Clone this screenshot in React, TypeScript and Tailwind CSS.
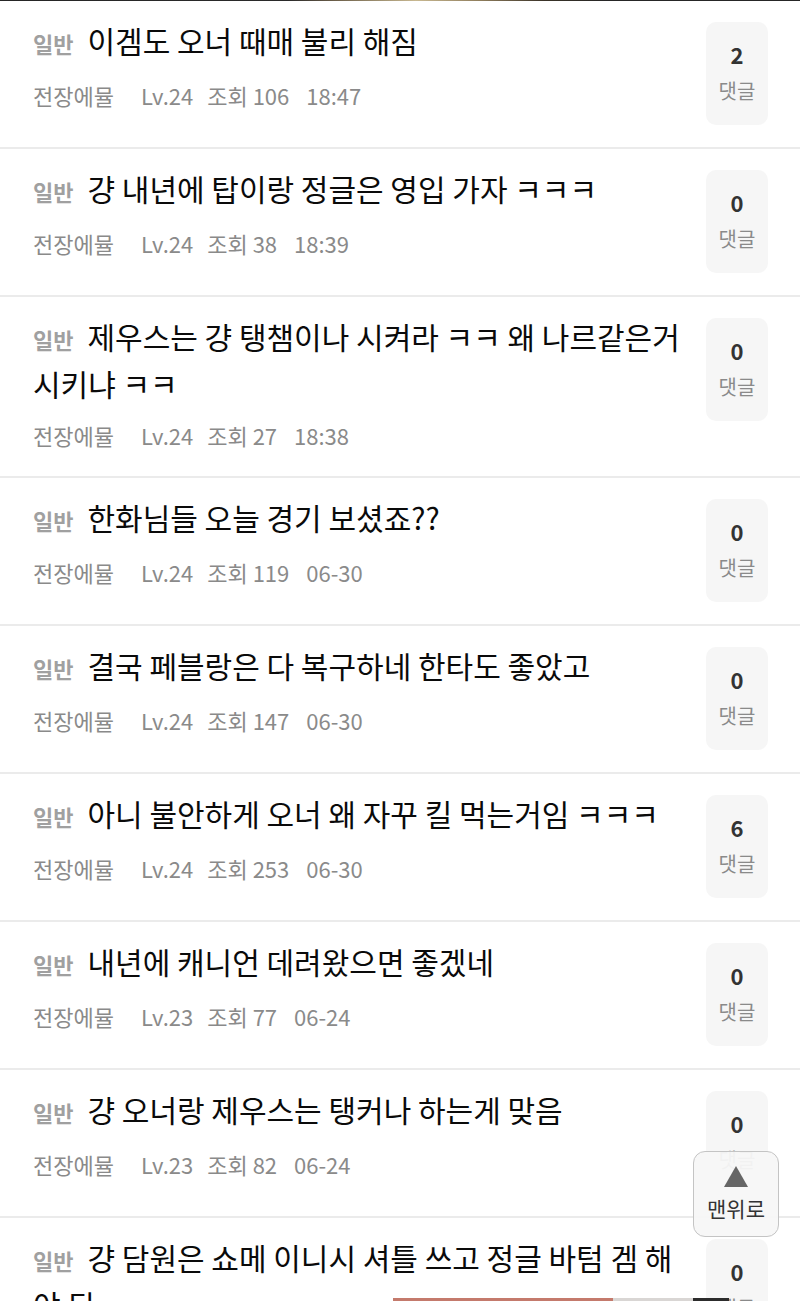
const POSTS = [
  { title: "이겜도 오너 때매 불리 해짐", lv: "Lv.24", views: 106, time: "18:47", comments: 2 },
  { title: "걍 내년에 탑이랑 정글은 영입 가자 ㅋㅋㅋ", lv: "Lv.24", views: 38, time: "18:39", comments: 0 },
  { title: "제우스는 걍 탱챔이나 시켜라 ㅋㅋ 왜 나르같은거 시키냐 ㅋㅋ", lv: "Lv.24", views: 27, time: "18:38", comments: 0 },
  { title: "한화님들 오늘 경기 보셨죠??", lv: "Lv.24", views: 119, time: "06-30", comments: 0 },
  { title: "결국 페블랑은 다 복구하네 한타도 좋았고", lv: "Lv.24", views: 147, time: "06-30", comments: 0 },
  { title: "아니 불안하게 오너 왜 자꾸 킬 먹는거임 ㅋㅋㅋ", lv: "Lv.24", views: 253, time: "06-30", comments: 6 },
  { title: "내년에 캐니언 데려왔으면 좋겠네", lv: "Lv.23", views: 77, time: "06-24", comments: 0 },
  { title: "걍 오너랑 제우스는 탱커나 하는게 맞음", lv: "Lv.23", views: 82, time: "06-24", comments: 0 },
  { title: "걍 담원은 쇼메 이니시 셔틀 쓰고 정글 바텀 겜 해야 됨", lv: "Lv.23", views: 64, time: "06-24", comments: 0 },
];

type Post = (typeof POSTS)[number];

export default function App() {
  return (
    <div className="relative h-[1301px] overflow-hidden bg-white font-['Noto_Sans_CJK_KR','Noto_Sans',sans-serif]">
      {/* bottom edge of the image above the list */}
      <div className="h-[1px] bg-[linear-gradient(90deg,#262626_0%,#2a2a2a_36%,#6d604a_42%,#c8b891_52%,#8f7d5c_60%,#3a3328_68%,#262626_76%,#262626_100%)]" />

      <ul>
        {POSTS.map((p, i) => (
          <PostRow key={i} post={p} />
        ))}
      </ul>

      {/* back to top */}
      <button className="absolute left-[693px] top-[1151px] flex h-[86px] w-[86px] flex-col items-center rounded-[12px] border-[1.5px] border-[#c4c4c4] bg-[#f7f7f7]/95">
        <span className="mt-[14px] h-0 w-0 border-x-[12px] border-b-[21px] border-x-transparent border-b-[#666666]" />
        <span className="mt-[6px] text-[21px] leading-[30px] text-[#333333]">맨위로</span>
      </button>

      {/* top of the banner below */}
      <div className="absolute bottom-0 left-0 flex h-[3px] w-full">
        <div className="w-[393px]" />
        <div className="w-[220px] bg-[#c47a6c]" />
        <div className="w-[80px] bg-[#d9d6d4]" />
        <div className="w-[36px] bg-[#2c2c2c]" />
      </div>
    </div>
  );
}

function PostRow({ post }: { post: Post }) {
  return (
    <li className="flex items-start border-b-2 border-[#ebebeb] pl-[33px] pr-[32px]">
      <div className="min-w-0 flex-1 pr-[14px] pb-[26px] pt-[17px]">
        <p className="text-[30px] leading-[44px] text-[#0a0a0a]">
          <span className="mr-[14px] text-[22px] font-bold text-[#a0a0a0]">일반</span>
          {post.title}
        </p>
        <div className="mt-[15px] flex text-[22px] leading-[30px] text-[#8a8a8a]">
          <span>전장에뮬</span>
          <span className="ml-[27px]">{post.lv}</span>
          <span className="ml-[14px]">조회 {post.views}</span>
          <span className="ml-[17px]">{post.time}</span>
        </div>
      </div>
      <div className="mb-[22px] mt-[21px] flex h-[103px] w-[62px] shrink-0 flex-col items-center rounded-[10px] bg-[#f6f6f6] pt-[17px]">
        <span className="text-[22px] font-bold leading-[30px] text-[#333333]">{post.comments}</span>
        <span className="mt-[7px] text-[20px] leading-[30px] text-[#8a8a8a]">댓글</span>
      </div>
    </li>
  );
}
